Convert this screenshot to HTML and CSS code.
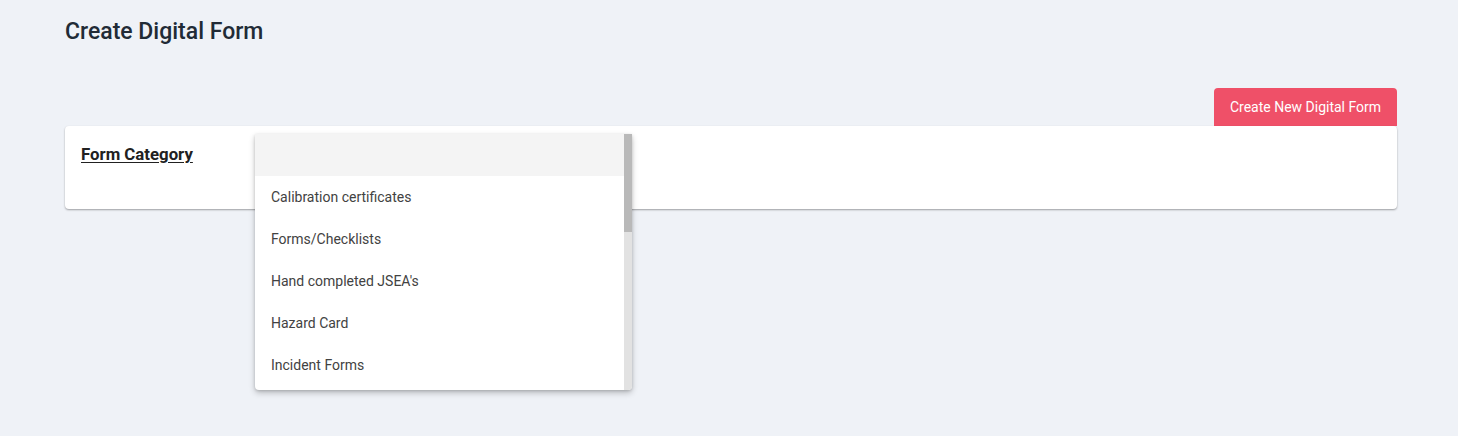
FILE: index.html
```html
<!DOCTYPE html>
<html>
<head>
<meta charset="utf-8">
<link rel="stylesheet" href="styles.css">
</head>
<body>
<div class="page">
  <h1 class="title">Create Digital Form</h1>
  <div class="actions">
    <button class="btn-primary">Create New Digital Form</button>
  </div>
  <div class="card">
    <span class="label">Form Category</span>
    <div class="dropdown">
      <ul class="menu">
        <li class="item empty"></li>
        <li class="item">Calibration certificates</li>
        <li class="item">Forms/Checklists</li>
        <li class="item">Hand completed JSEA's</li>
        <li class="item">Hazard Card</li>
        <li class="item">Incident Forms</li>
      </ul>
      <div class="scrollbar"><div class="thumb"></div></div>
    </div>
  </div>
</div>
</body>
</html>
```
FILE: styles.css
```css
html, body {
  margin: 0;
  padding: 0;
  background: #eff2f7;
  font-family: Roboto, "Liberation Sans", Arial, sans-serif;
}
.page {
  min-height: 436px;
  box-sizing: border-box;
  padding: 19px 61px 0 65px;
}
.title {
  margin: 0;
  font-size: 23px;
  line-height: 26px;
  font-weight: 500;
  color: #212b36;
}
.actions {
  display: flex;
  justify-content: flex-end;
  margin-top: 43px;
}
.btn-primary {
  height: 38px;
  width: 183px;
  border: none;
  border-radius: 4px 4px 0 0;
  background: #ef5068;
  color: #fff;
  font-family: Roboto, "Liberation Sans", Arial, sans-serif;
  font-size: 14px;
  padding: 0;
}
.card {
  position: relative;
  height: 83px;
  box-sizing: border-box;
  background: #fff;
  border-radius: 4px;
  box-shadow: 0 1px 2px rgba(0,0,0,0.35);
  padding: 16px;
}
.label {
  display: inline-block;
  font-size: 16.8px;
  line-height: 24px;
  font-weight: 700;
  color: #212121;
  text-decoration: underline;
  text-underline-offset: 2px;
}
.dropdown {
  position: absolute;
  left: 190px;
  top: 8px;
  width: 377px;
  height: 256px;
  display: flex;
  background: #fff;
  border-radius: 0 0 4px 4px;
  box-shadow: 0 3px 6px rgba(0,0,0,0.22), 0 1px 3px rgba(0,0,0,0.15);
  overflow: hidden;
  z-index: 5;
}
.menu {
  flex: 1;
  list-style: none;
  margin: 0;
  padding: 0;
}
.scrollbar {
  width: 8px;
  background: #e2e2e2;
}
.thumb {
  height: 98px;
  background: #b9b9b9;
}
.item {
  height: 42px;
  line-height: 42px;
  padding-left: 16px;
  font-size: 14px;
  color: #424242;
}
.item.empty {
  background: #f4f4f4;
}
```
